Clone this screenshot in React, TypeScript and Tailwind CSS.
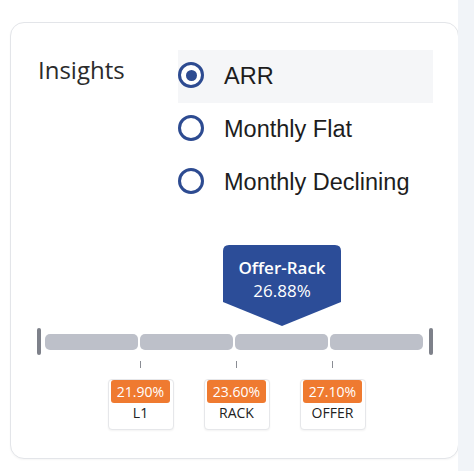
import React from "react";

const options = ["ARR", "Monthly Flat", "Monthly Declining"];

const markers = [
  { value: "21.90%", label: "L1" },
  { value: "23.60%", label: "RACK" },
  { value: "27.10%", label: "OFFER" },
];

function Radio({ checked }: { checked: boolean }) {
  return (
    <span className="flex h-[26px] w-[26px] shrink-0 items-center justify-center rounded-full border-[3.5px] border-[#2d4b91] bg-white">
      {checked && <span className="h-[11px] w-[11px] rounded-full bg-[#2d4b91]" />}
    </span>
  );
}

function Callout({ title, value }: { title: string; value: string }) {
  return (
    <div className="relative ml-[212px] h-[81px] w-[118px]">
      <svg width="118" height="81" viewBox="0 0 118 81" className="absolute inset-0">
        <path d="M0 6 Q0 0 6 0 H112 Q118 0 118 6 V57 L59 81 L0 57 Z" fill="#2c4d98" />
      </svg>
      <div className="absolute inset-x-0 top-[11px] flex flex-col items-center text-[17px] leading-[23px] text-white [font-family:'Open_Sans',sans-serif]">
        <span className="font-semibold">{title}</span>
        <span>{value}</span>
      </div>
    </div>
  );
}

export default function App() {
  const selected = "ARR";

  return (
    <div className="flex h-[471px] w-[474px] bg-white">
      <div className="w-[458px] shrink-0 pl-[10px] pt-[22px]">
        <div className="h-[437px] w-[449px] rounded-[14px] border border-[#e3e5e9] bg-white shadow-[0_1px_2px_rgba(0,0,0,0.04)]">
          <div className="flex pt-[27px]">
            <div className="w-[167px] pl-[27px] pt-[4px] text-[24px] leading-[32px] text-[#2b2b2b] [font-family:'Open_Sans',sans-serif]">
              Insights
            </div>
            <div className="flex w-[255px] flex-col">
              {options.map((o) => (
                <div
                  key={o}
                  className={`flex h-[53px] items-center gap-[20px] ${o === selected ? "bg-[#f5f6f8]" : ""}`}
                >
                  <div className="mb-[3px]">
                    <Radio checked={o === selected} />
                  </div>
                  <span className="pt-[1px] text-[23.5px] text-[#1d1d1d] [font-family:'Liberation_Sans',Arial,sans-serif]">
                    {o}
                  </span>
                </div>
              ))}
            </div>
          </div>

          <div className="mt-[36px]">
            <Callout title="Offer-Rack" value="26.88%" />

            <div className="mt-[2px] flex h-[27px] items-center pl-[26px]">
              <div className="h-[27px] w-[4px] rounded-full bg-[#7e818a]" />
              <div className="ml-[4px] flex w-[378px] gap-[2.5px]">
                {[0, 1, 2, 3].map((i) => (
                  <div key={i} className="h-[16px] flex-1 rounded-[5px] bg-[#bdc0c9]" />
                ))}
              </div>
              <div className="ml-[6px] h-[27px] w-[4px] rounded-full bg-[#7e818a]" />
            </div>

            <div className="mt-[6px] flex pl-[81.5px]">
              {markers.map((m) => (
                <div key={m.label} className="flex w-[96px] flex-col items-center">
                  <div className="h-[7px] w-px bg-[#8a8d94]" />
                  <div className="mt-[11px] flex h-[51px] w-[66px] flex-col items-center rounded-[4px] border border-[#e6e7ea] bg-white px-[2.5px] shadow-[0_1px_2px_rgba(0,0,0,0.05)] [font-family:'Open_Sans',sans-serif]">
                    <div className="flex h-[23px] w-full items-center justify-center rounded-[3px] bg-[#ef7a30] text-[14px] font-medium text-white">
                      {m.value}
                    </div>
                    <div className="mt-[1px] text-[14px] leading-[18px] text-[#222]">{m.label}</div>
                  </div>
                </div>
              ))}
            </div>
          </div>
        </div>
      </div>
      <div className="flex-1 bg-[#f1f4f8]" />
    </div>
  );
}
